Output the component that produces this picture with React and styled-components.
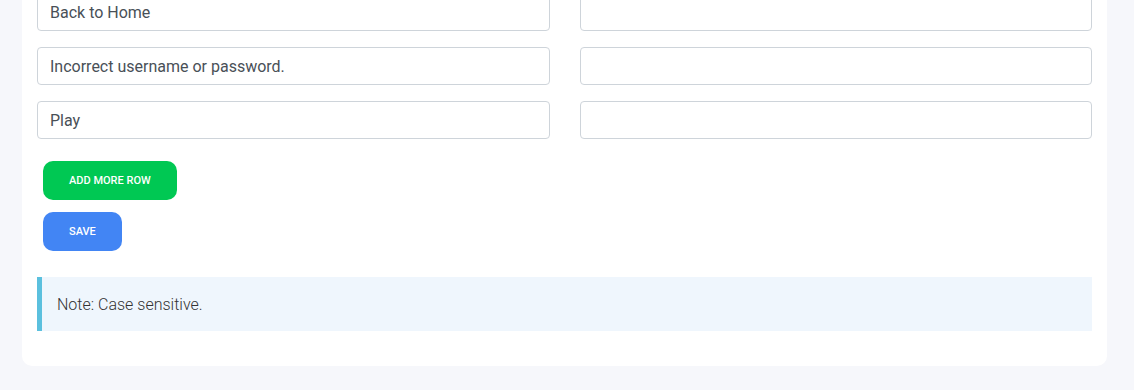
import React from 'react';
import styled, { createGlobalStyle } from 'styled-components';

const GlobalStyle = createGlobalStyle`
  html, body {
    margin: 0;
    padding: 0;
    background: #f6f7fb;
    font-family: Roboto, "Liberation Sans", sans-serif;
    overflow: hidden;
  }
`;

const Page = styled.div`
  padding: 0 27px 24px 22px;
`;

const Card = styled.div`
  background: #fff;
  border-radius: 0 0 10px 10px;
  margin-top: -27px;
  padding: 20px 15px 35px 15px;
`;

const FieldGrid = styled.div`
  display: grid;
  grid-template-columns: 1fr 1fr;
  column-gap: 30px;
  row-gap: 16px;
`;

const TextField = styled.input`
  display: block;
  box-sizing: border-box;
  width: 100%;
  height: 38px;
  padding: 0 12px;
  border: 1px solid #ced4da;
  border-radius: 4px;
  font-family: Roboto, "Liberation Sans", sans-serif;
  font-size: 16px;
  color: #495057;
  background: #fff;
  outline: none;
`;

const Actions = styled.div`
  display: flex;
  flex-direction: column;
  align-items: flex-start;
  gap: 12px;
  margin-top: 22px;
  padding-left: 6px;
`;

const ActionButton = styled.button`
  display: block;
  height: 39px;
  padding: 0 26px;
  border: none;
  border-radius: 10px;
  background: ${(p) => (p.$variant === 'green' ? '#00c853' : '#4285f4')};
  color: #fff;
  font-family: Roboto, "Liberation Sans", sans-serif;
  font-size: 11px;
  font-weight: 500;
  text-transform: uppercase;
  cursor: pointer;
`;

const Note = styled.div`
  margin-top: 26px;
  height: 54px;
  display: flex;
  align-items: center;
  box-sizing: border-box;
  padding-left: 15px;
  background: #eff6fd;
  border-left: 5px solid #5bc0de;
  font-size: 16px;
  font-weight: 300;
  color: #333;
`;

const rows = [
  ['Back to Home', ''],
  ['Incorrect username or password.', ''],
  ['Play', ''],
];

export default function App() {
  return (
    <>
      <GlobalStyle />
      <Page>
        <Card>
          <FieldGrid>
            {rows.map(([a, b], i) => (
              <React.Fragment key={i}>
                <TextField defaultValue={a} />
                <TextField defaultValue={b} />
              </React.Fragment>
            ))}
          </FieldGrid>
          <Actions>
            <ActionButton $variant="green">Add more row</ActionButton>
            <ActionButton $variant="blue">Save</ActionButton>
          </Actions>
          <Note>Note: Case sensitive.</Note>
        </Card>
      </Page>
    </>
  );
}
